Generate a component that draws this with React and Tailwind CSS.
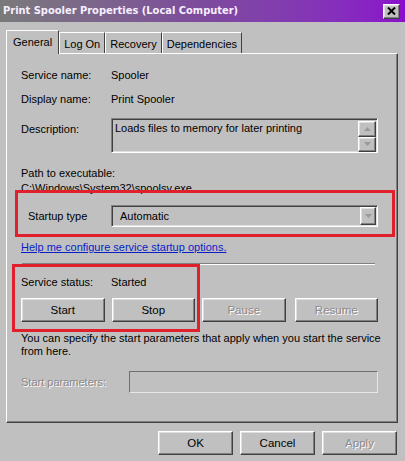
import React from "react";

const raised =
  "border border-t-white border-l-white border-r-[#404040] border-b-[#404040] shadow-[inset_-1px_-1px_#808080,inset_1px_1px_#dfdfdf]";
const sunken =
  "border border-t-[#808080] border-l-[#808080] border-r-white border-b-white shadow-[inset_1px_1px_#404040,inset_-1px_-1px_#dfdfdf]";

function Btn({ children, disabled, className = "" }) {
  return (
    <div
      className={`${raised} bg-[#c0c0c0] flex items-center justify-center h-[24px] text-[11.5px] ${className} ${
        disabled ? "text-[#8a8a8a] [text-shadow:1px_1px_0_#ffffff]" : "text-black"
      }`}
    >
      {children}
    </div>
  );
}

function ArrowBtn({ up, className = "" }) {
  return (
    <div className={`${raised} bg-[#c0c0c0] flex items-center justify-center ${className}`}>
      <svg width="7" height="4" viewBox="0 0 7 4">
        {up ? <path d="M0 4 L3.5 0 L7 4 Z" fill="#9a9a9a" /> : <path d="M0 0 L3.5 4 L7 0 Z" fill="#9a9a9a" />}
      </svg>
    </div>
  );
}

export default function App() {
  return (
    <div
      className="relative w-[405px] h-[461px] bg-[#c0c0c0] text-[11px] leading-[14px] overflow-hidden"
      style={{ fontFamily: '"Liberation Sans", Arial, sans-serif' }}
    >
      {/* title bar */}
      <div className="h-[22px] flex items-center justify-between pl-[3px] pr-[5px] bg-gradient-to-r from-[#7a7a7a] via-[#7d4a9c] to-[#8a0ccc]">
        <span
          className="text-[#f6efff] font-bold text-[11px]"
          style={{ fontFamily: '"DejaVu Sans Condensed", "DejaVu Sans", sans-serif', fontStretch: "condensed" }}
        >
          Print Spooler Properties (Local Computer)
        </span>
        <div className={`${raised} bg-[#c0c0c0] w-[17px] h-[15px] flex items-center justify-center`}>
          <svg width="9" height="8" viewBox="0 0 9 8">
            <path d="M1 0.5 L8 7.5 M8 0.5 L1 7.5" stroke="#000" strokeWidth="2" />
          </svg>
        </div>
      </div>

      {/* tabs */}
      <div className="flex items-end h-[31px] pl-[6px] text-[11px]">
        <div className="relative z-10 h-[24px] px-[6px] pt-[4px] bg-[#c0c0c0] border-t border-l border-white border-r border-r-[#404040] -mb-[1px]">
          General
        </div>
        <div className="h-[21px] px-[4px] pt-[4px] border-t border-l border-white border-r border-r-[#404040]">Log On</div>
        <div className="h-[21px] px-[4px] pt-[4px] border-t border-l border-white border-r border-r-[#404040]">Recovery</div>
        <div className="h-[21px] px-[4px] pt-[4px] border-t border-l border-white border-r border-r-[#404040]">Dependencies</div>
      </div>

      {/* tab panel */}
      <div className="ml-[6px] w-[392px] h-[370px] border border-t-white border-l-white border-r-[#404040] border-b-[#404040] shadow-[inset_-1px_-1px_#808080] pl-[14px] pr-[19px] pt-[14px]">
        <div className="flex h-[14px]">
          <span className="w-[90px]">Service name:</span>
          <span>Spooler</span>
        </div>
        <div className="flex h-[14px] mt-[10px]">
          <span className="w-[90px]">Display name:</span>
          <span>Print Spooler</span>
        </div>
        <div className="flex mt-[12px]">
          <span className="w-[90px] pt-[4px]">Description:</span>
          <div className={`${sunken} flex-1 h-[35px] flex justify-between pl-[3px] pr-[1px] pt-[2px]`}>
            <span>Loads files to memory for later printing</span>
            <div className="flex flex-col">
              <ArrowBtn up className="w-[18px] h-[16px]" />
              <ArrowBtn className="w-[18px] h-[16px]" />
            </div>
          </div>
        </div>
        <div className="mt-[13px] h-[14px]">Path to executable:</div>
        <div className="mt-[1px] h-[14px]">C:\Windows\System32\spoolsv.exe</div>

        <div className="flex items-center mt-[10px] h-[22px] pl-[7px]">
          <span className="w-[83px]">Startup type</span>
          <div className={`${sunken} flex-1 h-[22px] flex items-center justify-between pl-[8px] pr-[1px]`}>
            <span>Automatic</span>
            <ArrowBtn className="w-[16px] h-[18px]" />
          </div>
        </div>

        <div className="mt-[13px] h-[14px]">
          <span className="text-[#0a1ec8] underline">Help me configure service startup options.</span>
        </div>

        <div className="mt-[9px] h-[2px] border-t border-[#808080] border-b border-b-white mr-[3px] ml-[1px]" />

        <div className="flex h-[14px] mt-[10px]">
          <span className="w-[90px]">Service status:</span>
          <span>Started</span>
        </div>
        <div className="flex mt-[9px] gap-[7px]">
          <Btn className="w-[84px]">Start</Btn>
          <Btn className="w-[84px]">Stop</Btn>
          <Btn disabled className="w-[84px]">Pause</Btn>
          <Btn disabled className="w-[84px] ml-[2px]">Resume</Btn>
        </div>

        <div className="mt-[10px] leading-[13px] whitespace-nowrap">
          You can specify the start parameters that apply when you start the service
          <br />
          from here.
        </div>

        <div className="flex items-center mt-[13px]">
          <span className="w-[108px] text-[#8a8a8a] [text-shadow:1px_1px_0_#ffffff]">Start parameters:</span>
          <div className="flex-1 h-[22px] border border-t-[#707070] border-l-[#707070] border-r-[#e8e8e8] border-b-[#e8e8e8] bg-[#c0c0c0]" />
        </div>
      </div>

      {/* dialog buttons */}
      <div className="flex justify-end gap-[7px] pr-[8px] mt-[8px]">
        <Btn className="w-[75px]">OK</Btn>
        <Btn className="w-[75px]">Cancel</Btn>
        <Btn disabled className="w-[75px]">Apply</Btn>
      </div>

      {/* red highlight frames drawn over the dialog */}
      <div className="absolute left-[15px] top-[190px] w-[380px] h-[47px] border-[3px] border-[#e0202c] pointer-events-none" />
      <div className="absolute left-[12px] top-[264px] w-[188px] h-[68px] border-[3px] border-[#e0202c] pointer-events-none" />
    </div>
  );
}
